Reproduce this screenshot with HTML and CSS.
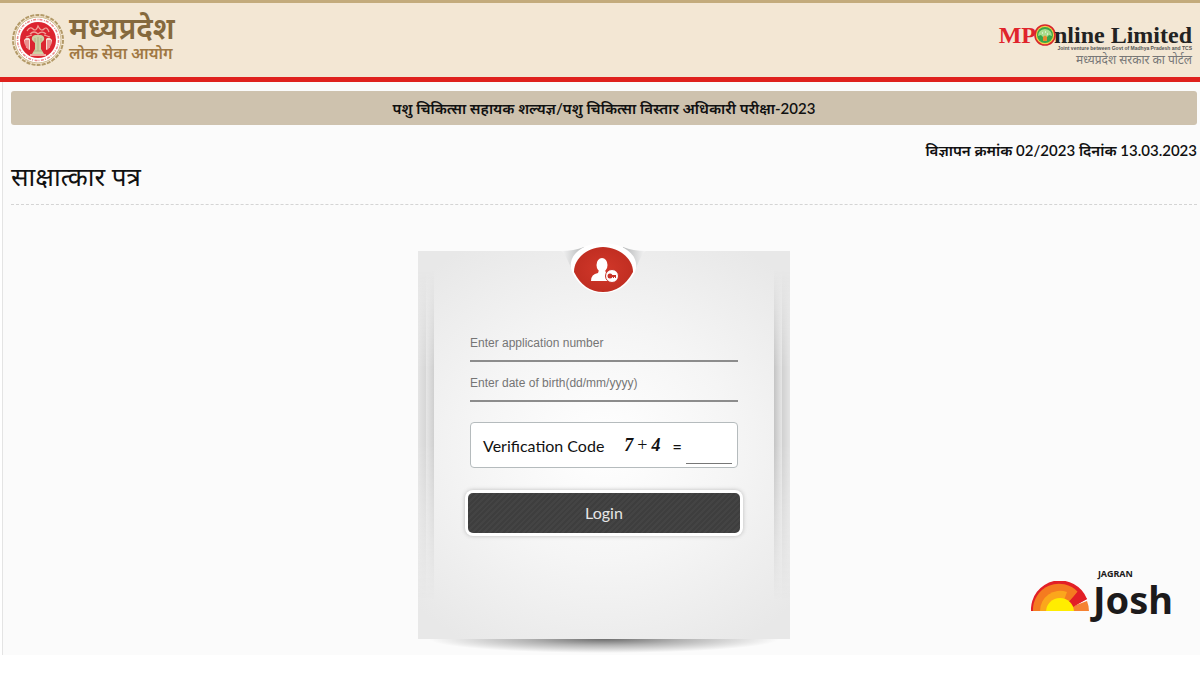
FILE: index.html
```html
<!DOCTYPE html>
<html lang="hi">
<head>
    <meta charset="UTF-8">
    <meta name="viewport" content="width=device-width, initial-scale=1.0">
    <title>साक्षात्कार पत्र</title>
    <link rel="stylesheet" href="styles.css">
</head>
<body>
    <header class="site-header">
        <a href="#" class="brand">
            <svg class="emblem" viewBox="0 0 54 54" aria-hidden="true">
                <circle cx="27" cy="27" r="25" fill="#f7ead6" stroke="#b39a68" stroke-width="2" stroke-dasharray="4 1.2"/>
                <circle cx="27" cy="27" r="23" fill="#fff" stroke="#cdb78c" stroke-width="1"/>
                <circle cx="27" cy="27" r="20.5" fill="none" stroke="#e88a8a" stroke-width="1.5" stroke-dasharray="3 1.5 1 1"/>
                <circle cx="27" cy="27" r="18" fill="#dc2430"/>
                <path d="M16 18q3-5 6-2t5-3q3 6 6 3t5 3M19 21q4-4 8 0q4-4 8 0M15 24l6-2M39 24l-6-2" fill="none" stroke="#f0a59a" stroke-width="1.2"/>
                <path d="M13 27q3-4 6-1v11q-5-1-6-10zM41 27q-3-4-6-1v11q5-1 6-10z" fill="#f7ddd2"/>
                <path d="M15 27v7M17 27v9M39 27v7M37 27v9" stroke="#d81f2b" stroke-width=".8"/>
                <path d="M21 27q-1-4 3-5h6q4 1 3 5l-3 3v6l3 5H21l3-5v-6z" fill="#cfd0a5"/>
                <path d="M24 25v4M27 24v14M30 25v4M23 38h8" stroke="#a9aa7e" stroke-width=".8"/>
                <path d="M19 42h16" stroke="#f6d7c5" stroke-width="1.5"/>
            </svg>
            <span class="brand-text">
                <span class="brand-name">मध्यप्रदेश</span>
                <span class="brand-sub">लोक सेवा आयोग</span>
            </span>
        </a>
        <a href="#" class="partner">
            <span class="partner-name">
                <span class="partner-mp">MP</span>
                <svg class="partner-o" viewBox="0 0 22 22" aria-hidden="true">
                    <circle cx="11" cy="11" r="10" fill="#f6cf46" stroke="#d8262c" stroke-width="1.6"/>
                    <circle cx="11" cy="11" r="8" fill="#3aa648"/>
                    <path d="M4 12q0-6 7-7q7 1 7 7l-3-1l-2 2v4H9v-4l-2-2z" fill="#a9dc8c"/>
                    <path d="M9 17v-4q2-3 4 0v4z" fill="#e88b2e"/>
                    <path d="M8 9h1M11 8h1M13 10h1" stroke="#fff" stroke-width="1"/>
                </svg>
                <span>nline Limited</span>
            </span>
            <span class="partner-note">Joint venture between Govt of Madhya Pradesh and TCS</span>
            <span class="partner-sub">मध्यप्रदेश सरकार का पोर्टल</span>
        </a>
    </header>

    <main class="content">
        <h1 class="exam-title">पशु चिकित्सा सहायक शल्यज्ञ/पशु चिकित्सा विस्तार अधिकारी परीक्षा-2023</h1>
        <p class="advert">विज्ञापन क्रमांक 02/2023 दिनांक 13.03.2023</p>
        <h2 class="page-title">साक्षात्कार पत्र</h2>

        <form class="login-card">
            <svg class="badge" viewBox="0 0 90 60" aria-hidden="true">
                <defs>
                    <linearGradient id="wing-left" x1="0" x2="1" y1="0" y2="0">
                        <stop offset="0" stop-color="#f6f6f6"/>
                        <stop offset="1" stop-color="#b4b6b7"/>
                    </linearGradient>
                    <linearGradient id="wing-right" x1="1" x2="0" y1="0" y2="0">
                        <stop offset="0" stop-color="#f6f6f6"/>
                        <stop offset="1" stop-color="#b4b6b7"/>
                    </linearGradient>
                    <radialGradient id="red" cx=".5" cy=".5" r=".6">
                        <stop offset="0" stop-color="#d2382a"/>
                        <stop offset="1" stop-color="#bd2c20"/>
                    </radialGradient>
                </defs>
                <path d="M1 13Q5 14 13 35L24 13V9Q14 13 1 13z" fill="url(#wing-left)"/>
                <path d="M86 13Q82 14 74 35L63 13V9Q73 13 86 13z" fill="url(#wing-right)"/>
                <path d="M12 34C6 18 22 5 43 5S81 18 75 34Q64 55 43 55T12 34z" fill="#fff"/>
                <path d="M14 34C14 20 28 9 43 9S73 20 73 34Q62 54 43 54T14 34z" fill="url(#red)"/>
                <ellipse cx="42" cy="27" rx="5.500" ry="7" fill="#fff"/>
                <path d="M31 43q0-7 7-8l1-3h6l1 3q7 1 7 8z" fill="#fff"/>
                <circle cx="52" cy="38" r="6.500" fill="#fff" stroke="#c83226" stroke-width="1"/>
                <circle cx="50" cy="38" r="2.500" fill="#c83226"/>
                <path d="M51 37h5v3h-1v-1h-1v1h-1v-1h-2z" fill="#c83226"/>
            </svg>
            <input type="text" class="field" placeholder="Enter application number" aria-label="Application number">
            <input type="text" class="field" placeholder="Enter date of birth(dd/mm/yyyy)" aria-label="Date of birth">
            <div class="captcha">
                <label for="code">Verification Code</label>
                <span class="sum"><b>7</b><span>+</span><b>4</b></span>
                <span class="equals">=</span>
                <input type="text" id="code" class="code">
            </div>
            <button type="submit" class="login-btn">Login</button>
        </form>

        <a href="#" class="josh" aria-label="Jagran Josh">
            <svg class="josh-sun" viewBox="0 0 58 30" aria-hidden="true">
                <path d="M0 30A29 29 0 0 1 56 18L42 25L29 30z" fill="#e21f26"/>
                <path d="M2 30A26 26 0 0 1 47 11L29 30z" fill="#f47b20"/>
                <path d="M58 30A29 29 0 0 0 56 20L29 30z" fill="#f58232"/>
                <path d="M9 30A20 20 0 0 1 36 11L29 30z" fill="#fba61c"/>
                <path d="M56 18L47 10L36 24L42 26z" fill="#e21f26"/>
                <circle cx="29" cy="31" r="14" fill="#ffed00"/>
            </svg>
            <span class="josh-text">
                <span class="josh-small">JAGRAN</span>
                <span class="josh-big">Josh</span>
            </span>
        </a>
    </main>
</body>
</html>
```
FILE: styles.css
```css
:root {
    --sand: #cec2ae; /* Title bar */
    --red: #df211d; /* Header rule */
    --page-bg: #fbfbfb;
    --line: #8c8c8c; /* Input underline */
    --hindi: Lato, "Noto Sans", "Noto Sans Devanagari", sans-serif;
}
* {
    box-sizing: border-box;
}
body {
    margin: 0;
    background: #fff;
    color: #111;
    font-family: var(--hindi);
}
a {
    color: inherit;
    text-decoration: none;
}

/* Header */
.site-header {
    display: flex;
    justify-content: space-between;
    align-items: center;
    height: 82px;
    padding: 0 8px 0 11px;
    background: #f3e7d4;
    border-top: 3px solid #c3ab7c;
    border-bottom: 5px solid var(--red);
}
.brand {
    display: flex;
    align-items: center;
    gap: 4px;
}
.emblem {
    width: 54px;
    height: 54px;
}
.brand-text {
    display: flex;
    flex-direction: column;
    padding-bottom: 6px;
    color: #85693d;
    font-weight: 600;
}
.brand-name {
    font-size: 30px;
    line-height: 32px;
}
.brand-sub {
    font-size: 16px;
    line-height: 20px;
    color: #a07843;
}
.partner {
    display: flex;
    flex-direction: column;
    align-items: flex-end;
    padding-top: 12px;
}
.partner-name {
    display: flex;
    align-items: center;
    font: 700 24px/20px "Liberation Serif", serif;
    color: #222;
}
.partner-mp {
    color: #e0242b;
}
.partner-o {
    width: 22px;
    height: 22px;
    margin: 0 -2px;
}
.partner-note {
    font: 700 5px/5px "Liberation Sans", sans-serif;
    color: #555;
}
.partner-sub {
    font-size: 12px;
    line-height: 18px;
    color: #777;
}

/* Content */
.content {
    position: relative;
    margin-left: 2px;
    padding: 9px 3px 16px 8px;
    background: var(--page-bg);
    border-left: 1px solid #e4e4e4;
}
.exam-title {
    margin: 0;
    background: var(--sand);
    border-radius: 3px;
    font-size: 15px;
    font-weight: 600;
    line-height: 34px;
    text-align: center;
}
.advert {
    margin: 13px 0 0;
    font-size: 15px;
    font-weight: 600;
    line-height: 24px;
    text-align: right;
}
.page-title {
    margin: 0 0 46px;
    padding-bottom: 14px;
    border-bottom: 1px dashed #d4d4d4;
    font-size: 26px;
    font-weight: 400;
    line-height: 28px;
}

/* Login card */
.login-card {
    position: relative;
    isolation: isolate;
    width: 372px;
    max-width: 100%;
    margin: 0 auto;
    padding: 71px 52px 106px;
    background: radial-gradient(ellipse 70% 60% at 50% 50%, #fff, #f5f5f5 50%, #e8e8e8);
}
/* Edges of the sheets stacked behind */
.login-card::before {
    content: "";
    position: absolute;
    inset: 0;
    z-index: -1;
    background:
        linear-gradient(to right, #e4e4e4, #d6d6d6 8px, #e6e6e6 8px, #cfcfcf 16px, transparent 16px) left / 50% 100% no-repeat,
        linear-gradient(to left, #e4e4e4, #d0d0d0 8px, #e6e6e6 8px, #c4c4c4 16px, transparent 16px) right / 50% 100% no-repeat;
    mask-image: linear-gradient(transparent 5%, #000 30%, #000 50%, transparent 90%);
}
.login-card::after {
    content: "";
    position: absolute;
    top: 100%;
    left: 0;
    right: 0;
    height: 14px;
    background: radial-gradient(ellipse 47% 100% at 50% 0, #6d6d6d, #b4b4b4 45%, transparent);
}
.badge {
    position: absolute;
    top: -13px;
    left: 142px;
    width: 90px;
    height: 60px;
}
.field {
    display: block;
    width: 100%;
    height: 40px;
    padding: 4px 0 0;
    border: 0;
    border-bottom: 2px solid var(--line);
    background: transparent;
    font: 12px "Liberation Sans", sans-serif;
}
.field::placeholder {
    color: #757575;
}
.captcha {
    display: flex;
    align-items: center;
    height: 46px;
    margin-top: 20px;
    padding: 0 5px 0 12px;
    background: #fff;
    border: 1px solid #b5bbbd;
    border-radius: 4px;
    font-size: 16px;
}
.sum {
    display: flex;
    gap: 4px;
    margin-left: 20px;
    font: 18px "Liberation Serif", serif;
}
.sum b {
    font-style: italic;
}
.equals {
    margin-left: 12px;
    font-weight: 700;
}
.code {
    width: 46px;
    height: 38px;
    margin-left: auto;
    padding: 0;
    border: 0;
    border-bottom: 1px solid #777;
    background: transparent;
}
.login-btn {
    display: block;
    width: 272px;
    height: 40px;
    margin: 25px -2px 0;
    padding: 0 0 2px;
    border: 0;
    border-radius: 5px;
    background: repeating-linear-gradient(135deg, #3e3e3e 0 2px, #444 2px 4px);
    box-shadow: 0 0 0 3px #fff, 0 0 4px 3px #bbb;
    color: #e6e6e6;
    font: 16px var(--hindi);
    cursor: pointer;
}

/* Watermark */
.josh {
    position: absolute;
    right: 27px;
    bottom: 35px;
    display: flex;
    align-items: flex-end;
    gap: 4px;
    color: #1c1a1b;
    font-family: "Noto Sans", sans-serif;
    font-weight: 700;
}
.josh-sun {
    width: 58px;
    height: 30px;
    margin-bottom: 9px;
}
.josh-text {
    display: flex;
    flex-direction: column;
}
.josh-small {
    padding-left: 5px;
    font-size: 9px;
    line-height: 8px;
}
.josh-big {
    font-size: 38px;
    line-height: 42px;
}
```
